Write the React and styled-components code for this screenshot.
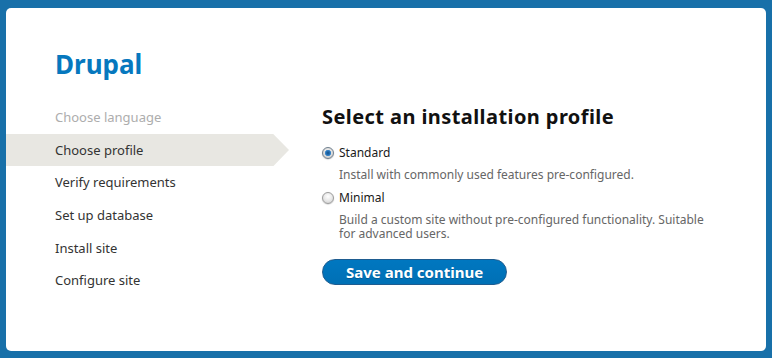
import React from "react";
import styled, { createGlobalStyle } from "styled-components";

const Global = createGlobalStyle`
  html, body { margin: 0; padding: 0; }
  body {
    background: #1870a9;
    font-family: "Noto Sans", "DejaVu Sans", sans-serif;
    width: 772px;
    height: 358px;
    overflow: hidden;
  }
`;

const Page = styled.div`
  padding: 8px 6px 7px 6px;
  box-sizing: border-box;
  width: 772px;
  height: 358px;
`;

const Panel = styled.div`
  background: #ffffff;
  border-radius: 5px;
  height: 343px;
  box-sizing: border-box;
  padding-top: 40px;
  display: flex;
  flex-direction: column;
`;

const Brand = styled.h1`
  margin: 0 0 21px 49px;
  font-size: 26px;
  line-height: 32px;
  font-weight: 700;
  color: #0678be;
`;

const Body = styled.div`
  display: flex;
  gap: 33px;
`;

const Steps = styled.ol`
  list-style: none;
  margin: 0;
  padding: 0;
  width: 283px;
  flex: none;
`;

const Step = styled.li`
  padding: 2px 0 2px 49px;
  height: 32.7px;
  box-sizing: border-box;
  line-height: 28.7px;
  font-size: 13px;
  color: ${(p) => (p.$done ? "#adadad" : "#333333")};
  background: ${(p) => (p.$active ? "#e8e7e2" : "transparent")};
  clip-path: ${(p) =>
    p.$active
      ? "polygon(0 0, calc(100% - 16px) 0, 100% 50%, calc(100% - 16px) 100%, 0 100%)"
      : "none"};
`;

const Content = styled.form`
  flex: 1;
  display: flex;
  flex-direction: column;
  padding-top: 4px;
`;

const Title = styled.h2`
  margin: 0 0 16px 0;
  font-size: 20px;
  line-height: 24px;
  letter-spacing: 0.42px;
  font-weight: 700;
  color: #111111;
`;

const Option = styled.div`
  display: flex;
  flex-direction: column;
  margin-bottom: 7px;
`;

const OptionLabel = styled.label`
  display: flex;
  align-items: center;
  gap: 5px;
  font-size: 12px;
  line-height: 16px;
  color: #1a1a1a;
`;

const Radio = styled.input.attrs({ type: "radio" })`
  appearance: none;
  margin: 0;
  width: 12px;
  height: 12px;
  border-radius: 50%;
  box-sizing: border-box;
  border: 1px solid #9c9c9c;
  background: radial-gradient(circle at 50% 35%, #ffffff 0%, #e6e6e6 55%, #c9c9c9 100%);
  box-shadow: 0 0.5px 1px rgba(0, 0, 0, 0.25);
  flex: none;

  &:checked {
    border-color: #6f7f8e;
    background:
      radial-gradient(circle at 50% 50%, #0f4f8a 0, #2b78bf 2.4px, #6aa6d8 3.1px, transparent 3.4px),
      radial-gradient(circle at 50% 35%, #f4f4f4 0%, #d3d3d3 70%, #b4b4b4 100%);
  }
`;

const Description = styled.div`
  margin: 7px 0 0 17px;
  font-size: 12px;
  line-height: 14.5px;
  color: #666666;
  max-width: 375px;
`;

const Submit = styled.button`
  margin-top: 10.5px;
  align-self: flex-start;
  height: 26px;
  padding: 0 23px;
  border-radius: 13px;
  border: 1px solid #1e5c90;
  background: linear-gradient(to bottom, #0077c0, #0070b5);
  color: #ffffff;
  font-family: "Noto Sans", "DejaVu Sans", sans-serif;
  font-size: 15px;
  font-weight: 700;
  line-height: 24px;
  text-shadow: 0 1px 0 rgba(0, 0, 0, 0.2);
  cursor: pointer;
`;

const steps = [
  { label: "Choose language", done: true },
  { label: "Choose profile", active: true },
  { label: "Verify requirements" },
  { label: "Set up database" },
  { label: "Install site" },
  { label: "Configure site" },
];

export default function App() {
  return (
    <>
      <Global />
      <Page>
        <Panel>
          <Brand>Drupal</Brand>
          <Body>
            <Steps>
              {steps.map((s) => (
                <Step key={s.label} $done={s.done} $active={s.active}>
                  {s.label}
                </Step>
              ))}
            </Steps>
            <Content onSubmit={(e) => e.preventDefault()}>
              <Title>Select an installation profile</Title>
              <Option>
                <OptionLabel>
                  <Radio name="profile" defaultChecked />
                  Standard
                </OptionLabel>
                <Description>Install with commonly used features pre-configured.</Description>
              </Option>
              <Option>
                <OptionLabel>
                  <Radio name="profile" />
                  Minimal
                </OptionLabel>
                <Description>
                  Build a custom site without pre-configured functionality. Suitable for advanced users.
                </Description>
              </Option>
              <Submit type="submit">Save and continue</Submit>
            </Content>
          </Body>
        </Panel>
      </Page>
    </>
  );
}
